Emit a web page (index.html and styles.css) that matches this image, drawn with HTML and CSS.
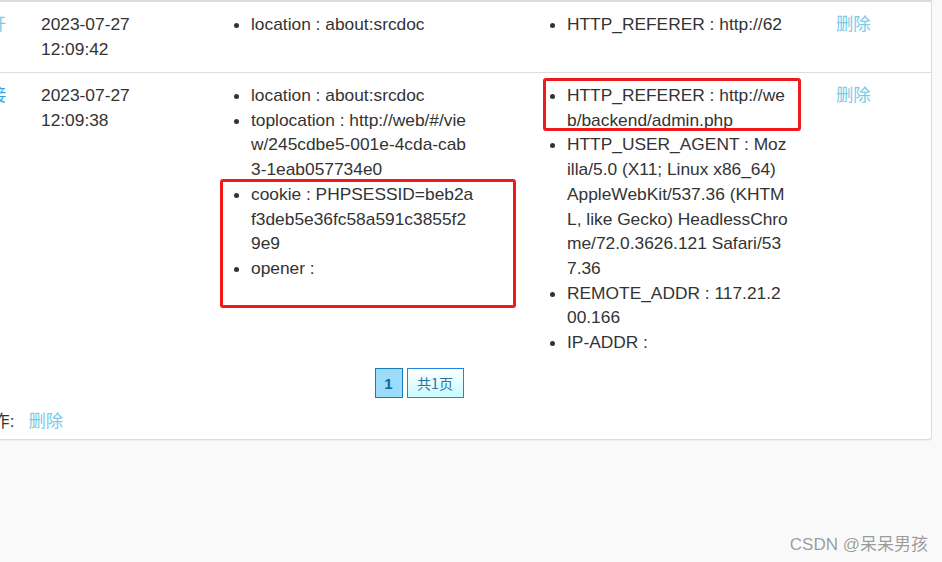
FILE: index.html
```html
<!DOCTYPE html>
<html lang="zh">
<head>
<meta charset="utf-8">
<title>Log</title>
<link rel="stylesheet" href="styles.css">
</head>
<body>
<div class="panel">
  <table class="log">
    <colgroup>
      <col class="c-open"><col class="c-time"><col class="c-kv1"><col class="c-kv2"><col class="c-act">
    </colgroup>
    <tbody>
      <tr>
        <td class="open"><a href="#">打开</a></td>
        <td>2023-07-27 12:09:42</td>
        <td><ul class="kv"><li>location : about:srcdoc</li></ul></td>
        <td><ul class="kv"><li>HTTP_REFERER : http://62</li></ul></td>
        <td><a href="#">删除</a></td>
      </tr>
      <tr>
        <td class="open"><a href="#" class="dark">链接</a></td>
        <td>2023-07-27 12:09:38</td>
        <td><ul class="kv">
          <li>location : about:srcdoc</li>
          <li>toplocation : http://web/#/view/245cdbe5-001e-4cda-cab3-1eab057734e0</li>
          <li>cookie : PHPSESSID=beb2af3deb5e36fc58a591c3855f29e9</li>
          <li>opener : </li>
        </ul></td>
        <td><ul class="kv">
          <li>HTTP_REFERER : http://web/backend/admin.php</li>
          <li>HTTP_USER_AGENT : Mozilla/5.0 (X11; Linux x86_64) AppleWebKit/537.36 (KHTML, like Gecko) HeadlessChrome/72.0.3626.121 Safari/537.36</li>
          <li>REMOTE_ADDR : 117.21.200.166</li>
          <li>IP-ADDR : </li>
        </ul></td>
        <td><a href="#">删除</a></td>
      </tr>
    </tbody>
  </table>
  <div class="pager">
    <span class="page current">1</span>
    <span class="page total">共1页</span>
  </div>
  <div class="ops">操作:<a href="#" class="op-link">删除</a></div>
</div>
<div class="mark mark-cookie"></div>
<div class="mark mark-referer"></div>
<div class="watermark">CSDN @呆呆男孩</div>
</body>
</html>
```

FILE: styles.css
```css
html, body {
  margin: 0;
  padding: 0;
}
body {
  background: #f9f9f9;
  width: 942px;
  height: 562px;
  overflow: hidden;
  position: relative;
  font-family: "Liberation Sans", Arial, "Noto Sans CJK SC", sans-serif;
  color: #333;
}
a {
  color: #78cbe9;
  text-decoration: none;
}
a.dark {
  color: #3aa0e0;
}
.panel {
  margin-left: -94px;
  width: 1026px;
  box-sizing: border-box;
  background: #fff;
  border: 1px solid #dcdcdc;
  border-top: 0;
  border-radius: 0 0 4px 4px;
  box-shadow: 0 1px 1px rgba(0, 0, 0, 0.05);
  font-size: 17.35px;
  line-height: 24.7px;
  padding-bottom: 5px;
}
.log {
  width: 100%;
  table-layout: fixed;
  border-collapse: collapse;
}
.c-open { width: 124px; }
.c-time { width: 160px; }
.c-kv1 { width: 316px; }
.c-kv2 { width: 319px; }
.c-act { width: 105px; }
.log td {
  padding: 10px 10px 10.6px;
  vertical-align: top;
  border-top: 1px solid #ddd;
}
.log tr:first-child td {
  border-top: 2px solid #ddd;
}
.log td.open {
  text-align: right;
  padding-right: 25px;
}
.kv {
  margin: 0;
  padding-left: 50px;
}
.kv li {
  width: 223px;
  word-break: break-all;
}
.pager {
  display: flex;
  justify-content: center;
  gap: 4px;
  margin-top: 3px;
}
.page {
  height: 30px;
  box-sizing: border-box;
  display: flex;
  align-items: center;
  justify-content: center;
  font-size: 15px;
  line-height: 1;
}
.page.current {
  width: 28px;
  background: #9cdcfb;
  border: 1px solid #1a7db6;
  color: #0d6aa2;
  font-weight: bold;
  font-size: 15px;
}
.page.total {
  width: 57px;
  background: linear-gradient(#ffffff, #c8fbff);
  border: 1px solid #1f86e6;
  color: #2574a6;
  font-family: "Noto Sans CJK SC", "Liberation Sans", sans-serif;
  font-size: 14px;
}
.ops {
  margin-top: 10.5px;
  padding-left: 68px;
  font-family: "Liberation Sans", "Noto Sans CJK SC", sans-serif;
}
.op-link {
  margin-left: 14px;
}
.mark {
  position: absolute;
  border: 3px solid #f2191b;
  border-radius: 3px;
  box-sizing: border-box;
}
.mark-cookie {
  left: 220px;
  top: 179px;
  width: 296px;
  height: 129px;
}
.mark-referer {
  left: 543px;
  top: 78px;
  width: 258px;
  height: 53px;
}
.watermark {
  position: absolute;
  right: 14px;
  bottom: 7px;
  font-size: 17px;
  line-height: 20px;
  color: rgba(0, 0, 0, 0.4);
  font-family: "Liberation Sans", "Noto Sans CJK SC", sans-serif;
}
```
